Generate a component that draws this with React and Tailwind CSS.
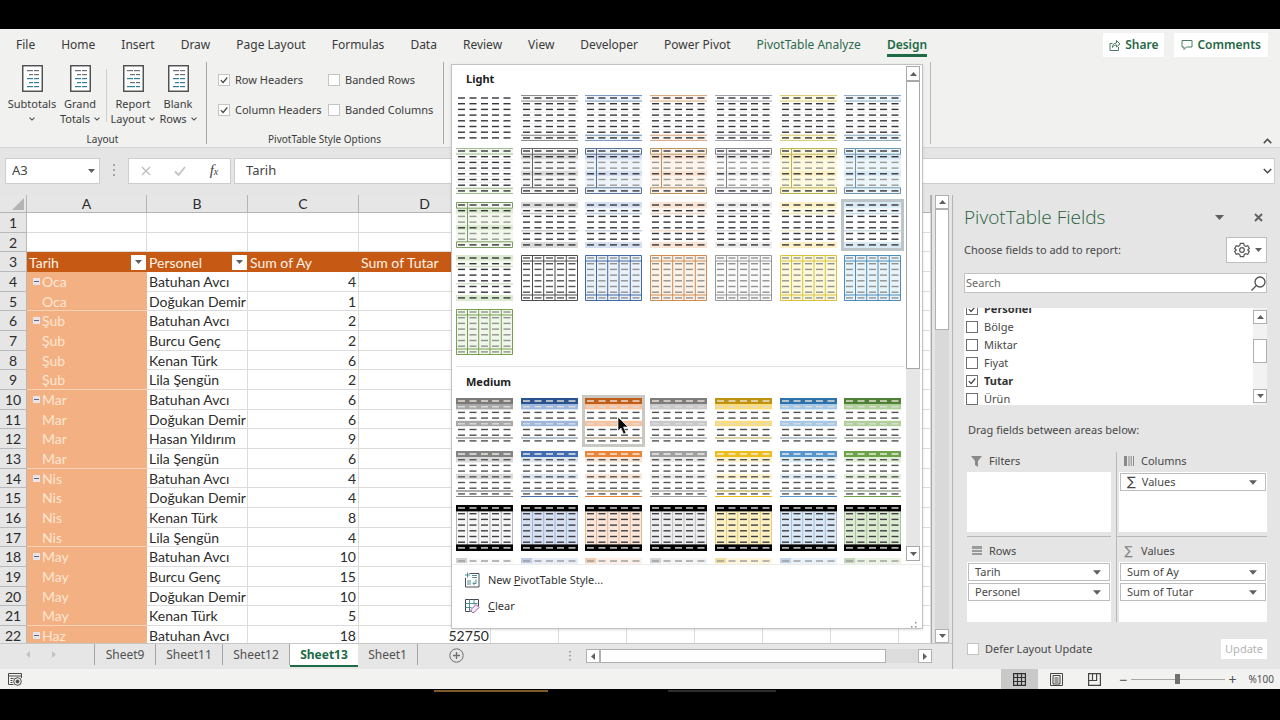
import React from "react";

const PALETTE = {
  gray: { line: "#8c8c8c", box: "#666666", tint: "#f2f2f2", band: "#dadada", grid: "#4c4c4c" },
  blue: { line: "#8098bd", box: "#5a7291", tint: "#e6eef8", band: "#d6dff0", grid: "#4169a3" },
  orange: { line: "#d9ab85", box: "#b99560", tint: "#fdf0e4", band: "#fae3d2", grid: "#cf8b50" },
  silver: { line: "#a3a3ad", box: "#82828a", tint: "#f9f9fa", band: "#ececec", grid: "#98989c" },
  gold: { line: "#d8cd7a", box: "#c0b452", tint: "#fcf8d2", band: "#fdf0c6", grid: "#d8c440" },
  sky: { line: "#8fb0c2", box: "#6c97ae", tint: "#e2f1f8", band: "#d9eaf4", grid: "#4c8dba" },
  green: { line: "#a3ba90", box: "#7f9e66", tint: "#ecf5e5", band: "#dcebd0", grid: "#78a051" },
};
const ORDER = ["gray", "blue", "orange", "silver", "gold", "sky", "green"];

const LIGHT = [
  { kind: "none", tone: "gray" },
  ...["lines", "boxed", "banded", "grid"].flatMap((kind) => ORDER.map((tone) => ({ kind, tone }))),
];

const MEDIUM_TONES = [
  { name: "gray", head: "#7a7a7a", mid: "#a8a8a8", head2: "#848484", soft: "#dadada", line: "#777777", body: "#f6f6f6", edge: "#b5b5b5" },
  { name: "blue", head: "#2a5490", mid: "#9db7de", head2: "#416cb2", soft: "#dde5f1", line: "#6f87a8", body: "#d8e1f1", edge: "#a3b6d8" },
  { name: "orange", head: "#c05f1c", mid: "#f7c29d", head2: "#ea8439", soft: "#fae6d8", line: "#a98c62", body: "#fbe6d9", edge: "#e8b795" },
  { name: "silver", head: "#7d7d7d", mid: "#c9c9c9", head2: "#a0a0a0", soft: "#ececec", line: "#999999", body: "#eeeeee", edge: "#c0c0c4" },
  { name: "gold", head: "#bf9412", mid: "#fbdc78", head2: "#edbd1d", soft: "#fdf2cd", line: "#bda94c", body: "#fdf0c2", edge: "#e2ce7e" },
  { name: "sky", head: "#2e72ac", mid: "#a5c9e6", head2: "#5596cc", soft: "#dfebf5", line: "#7a94aa", body: "#dbe8f5", edge: "#a6c2dc" },
  { name: "green", head: "#4f8038", mid: "#afd097", head2: "#6ba346", soft: "#e2eeda", line: "#8a9a80", body: "#deebd3", edge: "#aac59a" },
];
const MEDIUM = ["strong", "plain", "black", "outline"].flatMap((kind) =>
  MEDIUM_TONES.map((tone) => ({ kind, tone }))
);

const COLS = [2, 13.5, 25, 36, 47.5];
const ROWS = [0, 1, 2, 3, 4, 5, 6, 7];
const P = 5.7;

function Dashes({ color }) {
  return ROWS.map((r) =>
    COLS.map((x) => <rect key={r + "-" + x} x={x} y={r * P + 2.3} width="7" height="1.4" fill={color(r)} />)
  );
}

function LightArt({ kind, tone }) {
  const c = PALETTE[tone];
  const dark = "#36363c";
  const dim = tone === "gray" ? "#5a5a5a" : "#9a9a94";
  return (
    <svg viewBox="0 0 57 46" className="block h-[46px] w-[57px]" aria-hidden="true">
      {kind === "lines" && (
        <g>
          {[1, 2, 3, 4, 5, 6].map((r) => (
            <rect key={r} x="0" y={r * P + 5.4} width="57" height="0.6" fill="#dddddd" />
          ))}
          <rect width="57" height="6" fill={c.tint} opacity="0.7" />
          <rect y="40" width="57" height="6" fill={c.tint} opacity="0.7" />
          {[0, 5.6, 39.8, 45].map((y) => (
            <rect key={y} y={y} width="57" height="1" fill={c.line} />
          ))}
        </g>
      )}
      {kind === "boxed" && (
        <g>
          <rect width="57" height="46" fill={c.tint} opacity="0.7" />
          <rect y="6.5" width="57" height="4.8" fill={c.band} />
          <rect y="23" width="57" height="4.8" fill={c.band} />
          <path d="M.5 .5h56v5.7H.5zM.5 39.8h56v5.7H.5zM11.5 0v40" fill="none" stroke={c.box} />
        </g>
      )}
      {kind === "banded" && (
        <g>
          <rect width="57" height="5.8" fill={c.band} />
          <rect y="40" width="57" height="6" fill={c.band} />
          <rect y="6" width="57" height="5" fill={c.tint} opacity="0.6" />
          <rect y="11.3" width="57" height="0.9" fill={c.line} opacity="0.7" />
          <rect y="28.4" width="57" height="0.9" fill={c.line} opacity="0.7" />
        </g>
      )}
      {kind === "grid" && (
        <g>
          <rect width="57" height="46" fill={tone === "gray" ? "#ffffff" : c.tint} opacity="0.8" />
          <path
            d="M.5 .5h56v45H.5zM.5 6h56M.5 40h56M11.5 0v46M22.7 0v46M34 0v46M45.3 0v46"
            fill="none"
            stroke={c.grid}
          />
        </g>
      )}
      <Dashes
        color={(r) => {
          if (kind === "boxed") return [0, 1, 4, 7].includes(r) ? dark : dim;
          if (kind === "grid") return tone === "gray" ? "#555555" : "#929290";
          return dark;
        }}
      />
    </svg>
  );
}

function MediumArt({ kind, tone }) {
  const t = tone;
  return (
    <svg viewBox="0 0 57 46" className="block h-[46px] w-[57px]" aria-hidden="true">
      {kind === "strong" && (
        <g>
          <rect width="57" height="6" fill={t.head} />
          <rect y="6" width="57" height="5.4" fill={t.mid} />
          <rect y="22.8" width="57" height="5.4" fill={t.mid} />
          <rect y="39.5" width="57" height="1" fill={t.line} />
        </g>
      )}
      {kind === "plain" && (
        <g>
          <rect width="57" height="6" fill={t.head2} />
          <rect y="6" width="57" height="5.4" fill={t.soft} />
          <rect y="22.8" width="57" height="5.4" fill={t.soft} />
          <rect y="39.4" width="57" height="1.2" fill={t.line} />
          <rect y="45" width="57" height="1" fill={t.head2} />
        </g>
      )}
      {kind === "black" && (
        <g>
          <rect width="57" height="46" fill={t.body} />
          <path d="M.5 6v34M11.5 6v34M22.7 6v34M34 6v34M45.3 6v34M56.5 6v34" stroke={t.edge} />
          <rect width="57" height="6.4" fill="#000000" />
          <rect y="39.4" width="57" height="6.6" fill="#000000" />
        </g>
      )}
      {kind === "outline" && (
        <g>
          <rect width="57" height="46" fill={t.body} opacity="0.6" />
          <rect width="11" height="5" fill={t.edge} opacity="0.6" />
        </g>
      )}
      <Dashes
        color={(r) => {
          if (kind === "strong") return r === 0 ? "#f1e4d8" : [1, 4].includes(r) ? "#dcdcdc" : "#505050";
          if (kind === "plain") return r === 0 ? "#f3efe8" : "#555555";
          if (kind === "black") return r === 0 || r === 7 ? "#dcdcdc" : "#3f3f46";
          return "#9a9a9a";
        }}
      />
    </svg>
  );
}

const Triangle = ({ up = false, size = "h-[5px] w-[9px]" }) => (
  <svg viewBox="0 0 9 5" className={size} aria-hidden="true">
    <path d={up ? "M0 5L4.5 0L9 5z" : "M0 0h9L4.5 5z"} fill="#5f5f5f" />
  </svg>
);

const Chevron = ({ up = false, big = false }) => (
  <svg viewBox="0 0 8 5" className={big ? "h-[6px] w-[9px]" : "h-[4px] w-[6px]"} aria-hidden="true">
    <path d={up ? "M.7 4.4L4 1l3.3 3.4" : "M.7 .7L4 4L7.3 .7"} fill="none" stroke="#4a4a4a" strokeWidth="1.4" />
  </svg>
);

function Check({ id, checked, border = "border-[#c4c4c4]" }) {
  return (
    <span className="relative block size-3 shrink-0">
      <input
        id={id}
        type="checkbox"
        defaultChecked={checked}
        className={"peer block size-3 appearance-none border bg-white " + border}
      />
      <svg
        viewBox="0 0 12 12"
        className="pointer-events-none absolute inset-0 hidden size-3 peer-checked:block"
        aria-hidden="true"
      >
        <path d="M2.8 6.2l2.3 2.3l4.2-5" fill="none" stroke="#444444" strokeWidth="1.2" />
      </svg>
    </span>
  );
}

function SheetIcon({ lines }) {
  return (
    <svg viewBox="0 0 21 27" className="h-[27px] w-[21px]" aria-hidden="true">
      <rect x=".75" y=".75" width="19.5" height="25.5" fill="#ffffff" stroke="#4a4a4a" strokeWidth="1.4" />
      {lines.map(([x, w, blue], i) => (
        <g key={i} fill={blue ? "#2f7f9c" : "#6b7078"}>
          <rect x={x} y={5 + i * 4} width={w} height="1.2" />
          <rect x={x + w + 1} y={5 + i * 4} width={17 - x - w - 1} height="1.2" />
        </g>
      ))}
    </svg>
  );
}

function RibbonButton({ lines, top, bottom, width }) {
  return (
    <button className={"flex flex-col items-center text-[11px] leading-[15px] text-[#3c3c3c] " + width}>
      <SheetIcon lines={lines} />
      <span className="pt-1">{top}</span>
      <span className="flex h-[15px] items-center gap-1">
        {bottom}
        <Chevron />
      </span>
    </button>
  );
}

const TABS = ["File", "Home", "Insert", "Draw", "Page Layout", "Formulas", "Data", "Review", "View", "Developer", "Power Pivot"];

function TabBar() {
  return (
    <nav className="flex h-[33px] items-center pr-3 pb-[2px] pl-4 text-[12px] text-[#3a3a3a]">
      <div className="flex flex-1 items-center gap-[26px]">
        {TABS.map((t) => (
          <button key={t} className="whitespace-nowrap">{t}</button>
        ))}
        <button className="whitespace-nowrap text-[#2d6a4c]">PivotTable Analyze</button>
        <button className="flex h-6 items-center border-b-[3px] border-[#1c6b45] pt-[3px] font-semibold text-[#1c6b45]">Design</button>
      </div>
      <div className="flex gap-[10px] font-semibold text-[#1f6846]">
        <button className="flex h-6 items-center gap-1 bg-white px-[6px]">
          <svg viewBox="0 0 12 12" className="size-3" fill="none" stroke="#4c7a64" aria-hidden="true">
            <path d="M3.5 4.5H1v7h8.5V8M3.5 8.5C3.5 5.5 5 4 7.5 4V1.5L11 5L7.5 8V6C5.500 6 4.500 6.500 3.500 8.500z" />
          </svg>
          Share
        </button>
        <button className="flex h-6 items-center gap-1 bg-white px-[7px]">
          <svg viewBox="0 0 12 12" className="size-3" fill="none" stroke="#4c7a64" aria-hidden="true">
            <path d="M1 1.500h10v6.500H5.500L3 10.500V8H1z" />
          </svg>
          Comments
        </button>
      </div>
    </nav>
  );
}

function Gallery({ title, items, Art, selected, ring, rows }) {
  return (
    <section>
      <h3 className="pb-2 pl-[10px] text-[11px] leading-4 font-bold text-[#222222]">{title}</h3>
      <div className={"grid w-[453px] grid-cols-7 " + rows}>
        {items.map((it, i) => (
          <div key={i}>
            <button
              aria-label={title + " style " + (i + 1)}
              className={"block bg-white " + (i === selected ? ring : "")}
            >
              <Art {...it} />
            </button>
          </div>
        ))}
      </div>
    </section>
  );
}

function StyleMenu() {
  return (
    <div className="absolute top-[2px] left-[7px] z-20 flex h-[565px] w-[472px] flex-col border border-[#c2c2c2] bg-white shadow-sm">
      <div className="flex h-[499px] overflow-hidden pl-1">
        <div className="w-[449px] overflow-hidden pt-[6px]">
          <Gallery
            title="Light"
            items={LIGHT}
            Art={LightArt}
            selected={20}
            ring="outline-3 outline-[#bcc6c9]"
            rows="h-[267px] grid-rows-5"
          />
          <div className="mt-1 mb-[7px] border-t border-[#e6e3e6]" />
          <Gallery
            title="Medium"
            items={MEDIUM}
            Art={MediumArt}
            selected={2}
            ring="outline-3 outline-[#cac8c2]"
            rows="h-[213px] grid-rows-4"
          />
        </div>
        <div className="mt-px mb-px ml-px flex h-[495px] w-[14px] flex-col bg-[#e6e6e6]">
          <button aria-label="Scroll up" className="flex h-[15px] items-center justify-center border border-[#a8a8a8] bg-white">
            <Triangle up size="h-1 w-[7px]" />
          </button>
          <div className="h-[288px] border border-[#a8a8a8] bg-white" />
          <div className="flex-1" />
          <button aria-label="Scroll down" className="flex h-[15px] items-center justify-center border border-[#a8a8a8] bg-white">
            <Triangle size="h-1 w-[7px]" />
          </button>
        </div>
      </div>
      <div className="flex flex-1 flex-col border-t border-[#ececec] pt-px pl-3 text-[11px] text-[#333333]">
        <button className="flex h-[28px] items-center gap-2">
          <svg viewBox="0 0 16 16" className="size-4" fill="none" stroke="#4b4f55" aria-hidden="true">
            <path d="M5.500 1.500H15v13.500H1.500V6" />
            <path d="M1 3h5M3.500 .500v5M8 3.500h5M8 5.500h5M4 8v5M6 8v5M12 7.500v4h-3M10.500 10l-1.700 1.500l1.700 1.500" stroke="#4f8f96" />
          </svg>
          <span>New <u>P</u>ivotTable Style...</span>
        </button>
        <button className="flex h-6 items-center gap-2">
          <svg viewBox="0 0 16 16" className="size-4" fill="none" aria-hidden="true">
            <path d="M1.500 1.500h13v7M1.500 1.500v12h5" stroke="#44484e" />
            <path d="M1.500 5.500h12M1.500 9.500h6M5.500 1.500v12M10 1.500v5" stroke="#4f8f96" />
            <path d="M7 11.500l5-5l3 3l-5 5H8.500L7 13z" fill="#f4e9f7" stroke="#8a5aa0" />
          </svg>
          <span><u>C</u>lear</span>
        </button>
        <svg viewBox="0 0 8 6" className="mt-1 mr-1 h-[6px] w-2 self-end" fill="#8a8a8a" aria-hidden="true">
          <path d="M5 0h1.500v1.500H5zM5 4h1.500v1.500H5zM1 4h1.500v1.500H1z" />
        </svg>
      </div>
      <svg viewBox="0 0 12 19" className="pointer-events-none absolute top-[351px] left-[165px] h-[19px] w-3" aria-hidden="true">
        <path d="M1 1v14l3-3l2.500 6l2.500-1l-2.500-6H11z" fill="#0a0a0a" stroke="#ffffff" strokeWidth=".6" />
      </svg>
    </div>
  );
}

const OPTIONS = [
  ["Row Headers", true],
  ["Banded Rows", false],
  ["Column Headers", true],
  ["Banded Columns", false],
];

function Ribbon() {
  const std = [[5, 6, false], [7, 4, false], [5, 6, true], [7, 4, true], [5, 6, true]];
  const alt = [[4, 6, false], [7, 5, false], [4, 6, true], [7, 5, false], [4, 8, true]];
  return (
    <div className="flex h-[86px] border-b border-[#d4d4d4] pb-[3px]">
      <section className="flex w-[207px] shrink-0 flex-col justify-between border-r border-[#a9a9a9] pt-[3px] pl-[7px]">
        <div className="flex">
          <RibbonButton lines={std} top="Subtotals" bottom="" width="w-[50px]" />
          <RibbonButton lines={std} top="Grand" bottom="Totals" width="w-[46px]" />
          <div className="mx-[3px] my-1 border-l border-[#cfcfcf]" />
          <RibbonButton lines={alt} top="Report" bottom="Layout" width="w-[46px]" />
          <RibbonButton lines={std} top="Blank" bottom="Rows" width="w-[44px]" />
        </div>
        <h2 className="pr-2 text-center text-[10px] leading-[10px] text-[#3c3c3c]">Layout</h2>
      </section>
      <section className="flex w-[237px] shrink-0 flex-col justify-between border-r border-[#a9a9a9] pl-[11px]">
        <div className="grid grid-cols-[110px_1fr] pt-[3px]">
          {OPTIONS.map(([label, on]) => (
            <label key={label} className="flex h-[30px] items-center gap-[5px] text-[11px] whitespace-nowrap text-[#3c3c3c]">
              <Check id={label.replace(" ", "-")} checked={on} />
              {label}
            </label>
          ))}
        </div>
        <h2 className="pr-3 text-center text-[10px] leading-[10px] text-[#3c3c3c]">PivotTable Style Options</h2>
      </section>
      <section className="relative w-[487px] shrink-0 border-r border-[#b9b9b9]">
        <StyleMenu />
      </section>
      <div className="flex flex-1 items-end justify-end pr-2">
        <button aria-label="Collapse the ribbon">
          <Chevron up big />
        </button>
      </div>
    </div>
  );
}

function FormulaBar() {
  return (
    <div className="flex h-[47px] items-start px-[5px] pt-[10px] text-[13px] text-[#444444]">
      <div className="flex h-[26px] w-[95px] items-center border border-[#cdcdcd] bg-white pr-1 pl-[6px]">
        <input aria-label="Name box" defaultValue="A3" className="w-full min-w-0 flex-1 bg-transparent outline-none" />
        <button aria-label="Open name list"><Triangle size="h-1 w-[7px]" /></button>
      </div>
      <svg viewBox="0 0 2 12" className="mx-[13px] mt-[6px] h-3 w-[2px]" fill="#a5a5a5" aria-hidden="true">
        <path d="M0 0h2v2H0zM0 5h2v2H0zM0 10h2v2H0z" />
      </svg>
      <div className="flex h-[26px] w-[103px] items-center justify-around border border-[#cdcdcd] bg-white">
        <button aria-label="Cancel">
          <svg viewBox="0 0 10 10" className="size-[10px]" aria-hidden="true"><path d="M1 1l8 8M9 1L1 9" stroke="#bdbdbd" strokeWidth="1.300" /></svg>
        </button>
        <button aria-label="Enter">
          <svg viewBox="0 0 12 10" className="h-[10px] w-3" aria-hidden="true"><path d="M1 5.500l3.500 3.500L11 1" fill="none" stroke="#c2c2c2" strokeWidth="1.800" /></svg>
        </button>
        <button aria-label="Insert function" className="font-['Liberation_Serif',serif] text-[15px] leading-4 italic">
          f<span className="text-[10px]">x</span>
        </button>
      </div>
      <div className="ml-[3px] flex h-[26px] flex-1 items-center border border-[#cdcdcd] bg-white pr-[2px] pl-[11px]">
        <input aria-label="Formula" defaultValue="Tarih" className="min-w-0 flex-1 bg-transparent outline-none" />
        <button aria-label="Expand formula bar"><Chevron big /></button>
      </div>
    </div>
  );
}

const DATA = [
  ["Oca", "Batuhan Avcı", 4], ["Oca", "Doğukan Demir", 1],
  ["Şub", "Batuhan Avcı", 2], ["Şub", "Burcu Genç", 2], ["Şub", "Kenan Türk", 6], ["Şub", "Lila Şengün", 2],
  ["Mar", "Batuhan Avcı", 6], ["Mar", "Doğukan Demir", 6], ["Mar", "Hasan Yıldırım", 9], ["Mar", "Lila Şengün", 6],
  ["Nis", "Batuhan Avcı", 4], ["Nis", "Doğukan Demir", 4], ["Nis", "Kenan Türk", 8], ["Nis", "Lila Şengün", 4],
  ["May", "Batuhan Avcı", 10], ["May", "Burcu Genç", 15], ["May", "Doğukan Demir", 10], ["May", "Kenan Türk", 5],
  ["Haz", "Batuhan Avcı", 18, 52750],
];
const EXTRA = ["E", "F", "G", "H", "I", "J", "K"];

function FilterHead({ children }) {
  return (
    <span className="flex items-center justify-between">
      {children}
      <button aria-label={"Filter " + children} className="mr-px flex size-[15px] items-center justify-center bg-white">
        <Triangle size="h-1 w-[7px]" />
      </button>
    </span>
  );
}

function Grid() {
  const cell = "border-r border-b border-[#dcdcdc] p-0";
  const head = "border-r border-b border-[#b4b4b4] p-0 text-center font-normal";
  const orange = "bg-[#c65a14] p-0 pl-[2px] text-left font-normal text-[#fff3e8]";
  const rowHead = (n) => (
    <th scope="row" className="border-r border-b border-[#b9b9b9] bg-[#e6e6e6] p-0 text-center font-normal">{n}</th>
  );
  const blanks = EXTRA.map((c) => <td key={c} className={cell} />);
  return (
    <table className="h-[451px] w-full table-fixed border-separate border-spacing-0 bg-white font-[Lato,sans-serif] text-[14px] leading-[17px] text-[#2c2c2c]">
      <colgroup>
        <col className="w-[27px]" />
        <col className="w-[120px]" />
        <col className="w-[101px]" />
        <col className="w-[111px]" />
        <col className="w-[132px]" />
        {EXTRA.slice(0, 6).map((c) => <col key={c} className="w-[68px]" />)}
        <col />
      </colgroup>
      <thead className="bg-[#e6e6e6]">
        <tr className="h-[18px]">
          <th className={head}>
            <svg viewBox="0 0 12 12" className="ml-3 size-3" aria-hidden="true"><path d="M12 0v12H0z" fill="#b4b4b4" /></svg>
          </th>
          {["A", "B", "C", "D", ...EXTRA].map((c) => <th key={c} scope="col" className={head}>{c}</th>)}
        </tr>
      </thead>
      <tbody>
        {[1, 2].map((n) => (
          <tr key={n}>
            {rowHead(n)}
            <td className={cell} /><td className={cell} /><td className={cell} /><td className={cell} />
            {blanks}
          </tr>
        ))}
        <tr>
          {rowHead(3)}
          <td className={orange}><FilterHead>Tarih</FilterHead></td>
          <td className={orange}><FilterHead>Personel</FilterHead></td>
          <td className={orange}>Sum of Ay</td>
          <td className={orange}>Sum of Tutar</td>
          {blanks}
        </tr>
        {DATA.map(([month, name, ay, tutar], i) => {
          const first = i === 0 || DATA[i - 1][0] !== month;
          const last = i < DATA.length - 1 && DATA[i + 1][0] !== month;
          return (
            <tr key={i}>
              {rowHead(i + 4)}
              <td className={"border-b bg-[#f3b083] p-0 text-[#fde6d2] " + (last ? "border-[#f9d3b8]" : "border-[#f3b083]")}>
                <span className="flex items-center">
                  <span className="flex w-[15px] pl-[6px]">
                    {first && (
                      <button aria-label={"Collapse " + month} className="flex size-[7px] items-center justify-center bg-[#e9e4ea]">
                        <span className="h-px w-[5px] bg-[#5b6a94]" />
                      </button>
                    )}
                  </span>
                  {month}
                </span>
              </td>
              <td className={cell + " pl-[2px] whitespace-nowrap"}>{name}</td>
              <td className={cell + " pr-[2px] text-right"}>{ay}</td>
              <td className={cell + " pr-[1px] text-right"}>{tutar}</td>
              {blanks}
            </tr>
          );
        })}
      </tbody>
    </table>
  );
}

function ScrollButton({ label, up, size }) {
  return (
    <button aria-label={label} className={"flex shrink-0 items-center justify-center border border-[#b0b0b0] bg-white " + size}>
      <Triangle up={up} size="h-1 w-[7px]" />
    </button>
  );
}

function SideArrow({ label, left, box }) {
  return (
    <button aria-label={label} className={"flex h-[14px] w-[14px] items-center justify-center " + box}>
      <svg viewBox="0 0 4 7" className="h-[7px] w-1" fill="currentColor" aria-hidden="true">
        <path d={left ? "M4 0v7L0 3.500z" : "M0 0v7l4-3.500z"} />
      </svg>
    </button>
  );
}

function SheetTabs() {
  const sep = "flex h-[21px] items-center justify-center border-r border-[#a6a6a6]";
  return (
    <div className="flex h-[26px] shrink-0 items-start border-t border-[#c6c6c6] bg-[#e6e6e6] text-[12px] text-[#505050]">
      <div className={"w-[95px] gap-3 pr-3 text-[#c2c2c2] " + sep}>
        <SideArrow label="Previous sheet" left box="" />
        <SideArrow label="Next sheet" box="" />
      </div>
      <button className={"w-[61px] " + sep}>Sheet9</button>
      <button className={"w-[67px] " + sep}>Sheet11</button>
      <button className={"w-[67px] " + sep}>Sheet12</button>
      <button className="flex h-[23px] w-[68px] items-center justify-center border-b-2 border-[#1c6b45] bg-white font-bold text-[#1c6b45]">Sheet13</button>
      <button className={"w-[60px] " + sep}>Sheet1</button>
      <button aria-label="New sheet" className="mt-1 ml-[31px]">
        <svg viewBox="0 0 15 15" className="size-[15px]" fill="none" stroke="#6d6d6d" aria-hidden="true">
          <circle cx="7.500" cy="7.500" r="6.700" />
          <path d="M7.500 4v7M4 7.500h7" strokeWidth="1.300" />
        </svg>
      </button>
      <div className="flex flex-1 items-center justify-end pt-[5px] pr-5">
        <svg viewBox="0 0 2 10" className="mr-[15px] h-[10px] w-[2px]" fill="#a0a0a0" aria-hidden="true">
          <path d="M0 0h2v1.500H0zM0 4h2v1.500H0zM0 8h2v1.500H0z" />
        </svg>
        <SideArrow label="Scroll left" left box="border border-[#b0b0b0] bg-white text-[#5f5f5f]" />
        <div className="h-[14px] w-[286px] border border-[#b0b0b0] bg-white" />
        <div className="h-[14px] w-8 bg-[#dcdcdc]" />
        <SideArrow label="Scroll right" box="border border-[#b0b0b0] bg-white text-[#5f5f5f]" />
      </div>
    </div>
  );
}

const FIELDS = [["Personel", true], ["Bölge", false], ["Miktar", false], ["Fiyat", false], ["Tutar", true], ["Ürün", false]];

function Chip({ sigma, children }) {
  return (
    <button className="flex h-[18px] w-full items-center justify-between border border-[#bdbdbd] bg-white pr-2 pl-[6px]">
      <span className="flex items-center gap-[6px]">
        {sigma && <span className="font-['DejaVu_Sans',sans-serif] text-[13px] leading-4">∑</span>}
        {children}
      </span>
      <Triangle size="h-[5px] w-2" />
    </button>
  );
}

function Area({ icon, title, children }) {
  return (
    <section className="flex flex-col">
      <h3 className="flex h-[18px] items-center gap-[7px] pl-1">
        <span className="flex w-[11px] justify-center">{icon}</span>
        {title}
      </h3>
      <div className="mt-[2px] flex h-[60px] flex-col gap-[2px] bg-white p-px">{children}</div>
    </section>
  );
}

function FieldsPane() {
  return (
    <aside className="flex w-[328px] shrink-0 flex-col border-l border-[#b4b4b4] pr-[13px] pl-[11px] text-[11px] text-[#484848]">
      <header className="flex items-center pt-2">
        <h2 className="flex-1 font-['Open_Sans',sans-serif] text-[19px] leading-7 font-light text-[#28603f]">PivotTable Fields</h2>
        <button aria-label="Pane options" className="pr-[30px]"><Triangle /></button>
        <button aria-label="Close" className="pr-1">
          <svg viewBox="0 0 9 9" className="size-[9px]" aria-hidden="true"><path d="M1 1l7 7M8 1L1 8" stroke="#5f5f5f" strokeWidth="1.800" /></svg>
        </button>
      </header>
      <div className="flex items-center justify-between pt-[6px]">
        <span>Choose fields to add to report:</span>
        <button aria-label="Tools" className="flex h-[26px] w-[41px] items-center justify-between border border-[#bdbdbd] bg-white px-1 pl-[7px]">
          <svg viewBox="0 0 24 24" className="size-4" fill="none" stroke="#555555" strokeWidth="1.800" aria-hidden="true">
            <path d="M9.500 2h5l.8 3.200l2.200 1.300l3.200-1l2.300 4.200L20.600 12l2.400 2.300l-2.300 4.200l-3.200-1l-2.200 1.300l-.8 3.200h-5l-.8-3.200l-2.200-1.300l-3.200 1L1 14.300L3.400 12L1 9.700l2.300-4.200l3.200 1l2.200-1.300z" />
            <circle cx="12" cy="12" r="3.500" />
          </svg>
          <Triangle size="h-1 w-[7px]" />
        </button>
      </div>
      <div className="mt-[10px] flex h-5 items-center border border-[#c2c2c2] bg-white pl-px">
        <input aria-label="Search fields" placeholder="Search" className="min-w-0 flex-1 bg-transparent outline-none placeholder:text-[#6a6a6a]" />
        <svg viewBox="0 0 15 15" className="size-[15px]" fill="none" stroke="#4f4f4f" strokeWidth="1.300" aria-hidden="true">
          <circle cx="9" cy="6" r="5" /><path d="M5.300 9.600L.5 14.500" />
        </svg>
      </div>
      <div className="mt-[15px] flex h-[97px] overflow-hidden bg-white">
        <ul className="-mt-2 flex-1 pl-[2px]">
          {FIELDS.map(([name, on]) => (
            <li key={name}>
              <label className={"flex h-[18px] items-center gap-[6px] leading-3 " + (on ? "font-bold text-[#333333]" : "")}>
                <Check id={"field-" + name} checked={on} border="border-[#6f6f6f]" />
                {name}
              </label>
            </li>
          ))}
        </ul>
        <div className="flex w-[14px] flex-col bg-[#f2f2f2] py-[2px]">
          <ScrollButton label="Scroll fields up" up size="h-[14px]" />
          <div className="mt-[15px] h-6 border border-[#b0b0b0] bg-white" />
          <div className="flex-1" />
          <ScrollButton label="Scroll fields down" size="h-[14px]" />
        </div>
      </div>
      <p className="pt-4 pl-1 leading-[18px]">Drag fields between areas below:</p>
      <div className="mt-[13px] ml-[3px] grid grid-cols-[144px_1fr]">
        <div className="border-b border-[#b9b9b9] pb-1">
          <Area title="Filters" icon={<svg viewBox="0 0 11 11" className="size-[11px]" aria-hidden="true"><path d="M0 0h11L7 5v6L4 9V5z" fill="#8a8a8a" /></svg>} />
        </div>
        <div className="ml-[5px] border-b border-l border-[#b9b9b9] pb-1 pl-[2px]">
          <Area title="Columns" icon={<svg viewBox="0 0 10 10" className="size-[10px]" aria-hidden="true"><path d="M0 0h3v10H0zM4.500 0h1v10h-1zM6.700 0h1v10h-1zM9 0h1v10H9z" fill="#8a8a8a" /></svg>}>
            <Chip sigma>Values</Chip>
          </Area>
        </div>
        <div className="pt-[5px]">
          <Area title="Rows" icon={<svg viewBox="0 0 10 10" className="size-[10px]" aria-hidden="true"><path d="M0 0h10v3H0zM0 4h10v2H0zM0 7h10v2H0z" fill="#9a9a9a" /></svg>}>
            <Chip>Tarih</Chip>
            <Chip>Personel</Chip>
          </Area>
        </div>
        <div className="ml-[5px] border-l border-[#b9b9b9] pt-[5px] pl-[2px]">
          <Area title="Values" icon={<span className="font-['DejaVu_Sans',sans-serif] text-[12px] leading-3 text-[#808080]">∑</span>}>
            <Chip>Sum of Ay</Chip>
            <Chip>Sum of Tutar</Chip>
          </Area>
        </div>
      </div>
      <div className="flex items-center justify-between pt-[17px] pl-[3px]">
        <label className="flex items-center gap-[6px]">
          <Check id="defer" checked={false} />
          Defer Layout Update
        </label>
        <button disabled className="h-5 bg-white px-1 text-[#b4b4b4]">Update</button>
      </div>
    </aside>
  );
}

function StatusBar() {
  return (
    <footer className="flex h-5 shrink-0 items-center bg-[#f2f2f0] pr-[6px] pl-2 text-[10px] text-[#505050]">
      <button aria-label="Record macro" className="mr-auto">
        <svg viewBox="0 0 14 13" className="h-[13px] w-[14px]" fill="none" stroke="#4a4a4a" aria-hidden="true">
          <path d="M13.500 5V.5H.5v11h5M.5 3h13M2.500 5.500h3M2.500 7.500h2M2.500 9.500h2" />
          <circle cx="9.500" cy="8.500" r="3.800" /><circle cx="9.500" cy="8.500" r="1.500" fill="#4a4a4a" />
        </svg>
      </button>
      <button aria-label="Normal view" className="flex h-5 w-[37px] items-center justify-center bg-[#c9c9c9]">
        <svg viewBox="0 0 13 13" className="size-[13px]" fill="none" stroke="#2f2f2f" strokeWidth="1.200" aria-hidden="true">
          <path d="M.6 .6h11.800v11.800H.6zM.6 4.500h11.800M.6 8.500h11.800M4.500 .6v11.800M8.500 .6v11.800" />
        </svg>
      </button>
      <button aria-label="Page layout view" className="flex h-5 w-[38px] items-center justify-center">
        <svg viewBox="0 0 13 13" className="size-[13px]" fill="none" stroke="#444444" aria-hidden="true">
          <path d="M.5 .5h12v12H.5zM3 2.500h7v8.500H3zM4.500 5h4M4.500 7h4M4.500 9h4" />
        </svg>
      </button>
      <button aria-label="Page break view" className="flex h-5 w-[37px] items-center justify-center">
        <svg viewBox="0 0 13 13" className="size-[13px]" fill="none" stroke="#444444" strokeWidth="1.200" aria-hidden="true">
          <path d="M.6 .6h11.800v11.800H.6zM.6 7.500h8v-7M4.500 .6v6.900" />
        </svg>
      </button>
      <button aria-label="Zoom out" className="ml-1 flex w-[14px] justify-center text-[14px]">−</button>
      <input
        type="range"
        aria-label="Zoom"
        min="0"
        max="100"
        defaultValue="50"
        className="h-px w-[94px] appearance-none bg-[#a8a8a8] [&::-webkit-slider-thumb]:h-[10px] [&::-webkit-slider-thumb]:w-[5px] [&::-webkit-slider-thumb]:appearance-none [&::-webkit-slider-thumb]:bg-[#707070]"
      />
      <button aria-label="Zoom in" className="mr-2 flex w-[16px] justify-center text-[14px]">+</button>
      <span>%100</span>
    </footer>
  );
}

export default function App() {
  return (
    <div className="flex min-h-screen flex-col bg-black pt-[29px] font-['Noto_Sans','Open_Sans',sans-serif]">
      <div className="bg-[#f1f1ef]">
        <TabBar />
        <Ribbon />
      </div>
      <div className="flex flex-col bg-[#e5e5e5]">
        <FormulaBar />
        <div className="flex h-[474px]">
          <main className="flex min-w-0 flex-1 flex-col">
            <div className="flex min-h-0 flex-1">
              <div className="min-w-0 flex-1 overflow-hidden border-r border-[#a9a9a9]">
                <Grid />
              </div>
              <div className="mr-[3px] ml-[3px] flex w-[14px] flex-col bg-[#d9d9d9]">
                <ScrollButton label="Scroll sheet up" up size="h-[14px]" />
                <div className="h-[121px] border border-[#b0b0b0] bg-white" />
                <div className="flex-1" />
                <ScrollButton label="Scroll sheet down" size="h-[14px]" />
              </div>
            </div>
            <SheetTabs />
          </main>
          <FieldsPane />
        </div>
      </div>
      <StatusBar />
      <div className="flex h-[3px] pt-px">
        <div className="ml-[434px] w-[114px] bg-[#7d5a26]" />
        <div className="ml-[120px] w-[108px] bg-[#2e2e2e]" />
      </div>
    </div>
  );
}
